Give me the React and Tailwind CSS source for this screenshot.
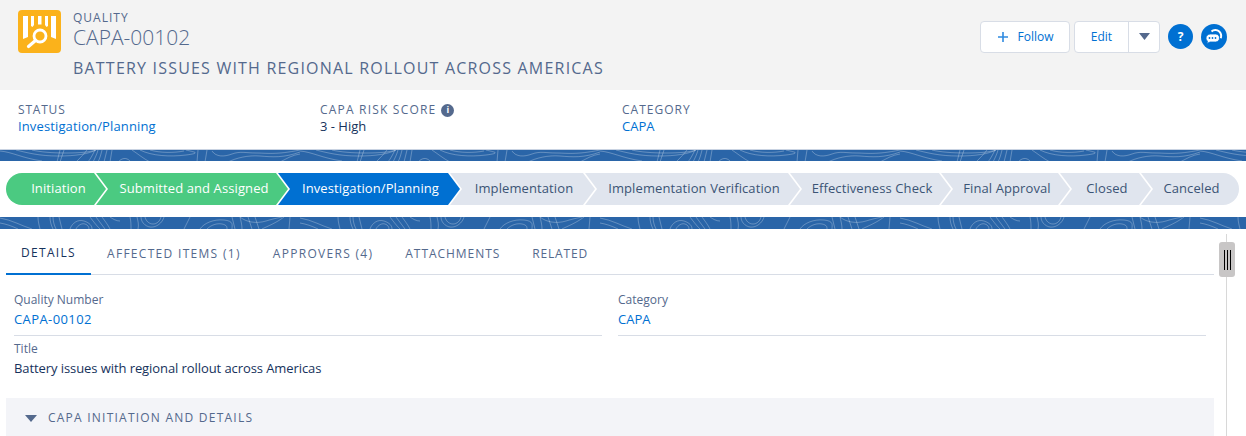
import { useId } from "react"

const steps = [
  { label: "Initiation", cls: "w-[100px] pl-[5px]! bg-[#4bca81] text-white font-medium rounded-l-full [clip-path:polygon(0_0,calc(100%-12px)_0,100%_50%,calc(100%-12px)_100%,0_100%)]" },
  { label: "Submitted and Assigned", cls: "w-[192px] -ml-[10px] pl-[4px]! bg-[#4bca81] text-white font-medium [clip-path:polygon(0_0,calc(100%-12px)_0,100%_50%,calc(100%-12px)_100%,0_100%,12px_50%)]" },
  { label: "Investigation/Planning", cls: "w-[182px] -ml-[10px] bg-[#0070d2] text-white font-medium [clip-path:polygon(0_0,calc(100%-12px)_0,100%_50%,calc(100%-12px)_100%,0_100%,12px_50%)]" },
  { label: "Implementation", cls: "w-[145px] -ml-[10px] bg-[#e0e5ee] text-[#3b5475] [clip-path:polygon(0_0,calc(100%-12px)_0,100%_50%,calc(100%-12px)_100%,0_100%,12px_50%)]" },
  { label: "Implementation Verification", cls: "w-[215px] -ml-[10px] bg-[#e0e5ee] text-[#3b5475] [clip-path:polygon(0_0,calc(100%-12px)_0,100%_50%,calc(100%-12px)_100%,0_100%,12px_50%)]" },
  { label: "Effectiveness Check", cls: "w-[161px] -ml-[10px] bg-[#e0e5ee] text-[#3b5475] [clip-path:polygon(0_0,calc(100%-12px)_0,100%_50%,calc(100%-12px)_100%,0_100%,12px_50%)]" },
  { label: "Final Approval", cls: "w-[129px] -ml-[10px] bg-[#e0e5ee] text-[#3b5475] [clip-path:polygon(0_0,calc(100%-12px)_0,100%_50%,calc(100%-12px)_100%,0_100%,12px_50%)]" },
  { label: "Closed", cls: "w-[91px] -ml-[10px] bg-[#e0e5ee] text-[#3b5475] [clip-path:polygon(0_0,calc(100%-12px)_0,100%_50%,calc(100%-12px)_100%,0_100%,12px_50%)]" },
  { label: "Canceled", cls: "w-[98px] -ml-[10px] bg-[#e0e5ee] text-[#3b5475] rounded-r-full [clip-path:polygon(0_0,100%_0,100%_100%,0_100%,12px_50%)]" },
]

const tabs = [
  { label: "Affected Items (1)", cls: "tracking-[1.3px]" },
  { label: "Approvers (4)", cls: "tracking-[1.3px]" },
  { label: "Attachments", cls: "tracking-[0.95px]" },
  { label: "Related", cls: "tracking-[0.85px]" },
]

// contour lines, one 300px tile for each band
const topLines = [
  "M0 1c12 1 22 7 42 10",
  "M16 0c12 3 24 6 42 6s30-2 38-6",
  "M32 0c8 2 20 3 34 3s24-1 30-3",
  "M60 0l-3 12M64 0l-4 12",
  "M76 12c4-4 8-8 11-12M88 12c3-4 5-8 7-12M93 12c2-4 4-8 5-12M98 12c2-4 3-8 4-12M104 12c1-4 2-8 3-12M110 12c1-4 1-8 2-12",
  "M118 12c4-4 8-5 12-1",
  "M132 0c6 4 12 9 18 12",
  "M140 0c12 6 30 7 46 5s8-3 0-5",
  "M150 0c10 3 24 3 34 1",
  "M198 0l-1 12M207 0l-2 12",
  "M212 1c4 6 12 6 20 3s14-1 24-1 20 2 44-3",
  "M228 12c8-4 20-7 32-6s24 2 40-4",
  "M280 12c6-3 12-7 20-8",
]

const bottomLines = [
  "M0 1c12 2 22 8 32 11",
  "M0 6c6 1 12 3 18 6",
  "M38 0c0 4 1 8 2 12M50 0c0 4 1 8 3 12M53 0c0 4 1 8 3 12M59 0c1 4 2 8 3 12",
  "M70 12c2-6 8-10 14-8s8 5 8 8",
  "M76 12c2-4 6-6 9-5s4 3 4 5",
  "M90 0c3 4 6 8 10 12M96 0c3 4 6 8 9 12M102 0c3 4 6 8 8 12M110 0c3 2 6 4 10 4",
  "M130 0c1 4 1 8 1 12M137 0c1 4 2 8 1 12",
  "M141 0c0 6 6 11 12 10s10-6 11-10",
  "M145 0c1 4 4 7 8 7s7-3 8-7",
  "M190 0l-6 12",
  "M200 12c4-6 14-10 24-9s8 5 8 9",
  "M207 12c4-4 10-6 15-5s5 3 5 5",
  "M232 0c1 4 2 8 3 12M240 0c1 4 2 8 2 12M248 0c1 4 3 8 4 12M255 0c1 4 3 8 4 12",
  "M240 0c6 5 16 7 26 4s12-3 16-4",
  "M262 12c6-3 14-6 22-12",
  "M290 0l-1 12",
]

function Band({ lines, border }) {
  const id = useId()
  return (
    <div className={border ? "h-[12px] bg-[#2a65a8] border-t border-[#c9d3e2]" : "h-[12px] bg-[#2a65a8]"}>
      <svg width="100%" height="100%">
        <defs>
          <pattern id={id} width="300" height="12" patternUnits="userSpaceOnUse">
            <path d={lines.join("")} fill="none" stroke="#fff" strokeOpacity="0.36" strokeWidth="0.75" />
          </pattern>
        </defs>
        <rect width="100%" height="100%" fill={`url(#${id})`} />
      </svg>
    </div>
  )
}

function QualityIcon() {
  return (
    <div className="w-[43px] h-[43px] bg-[#fbb21b] rounded-[4px] shrink-0">
      <svg width="43" height="43" viewBox="0 0 43 43" fill="#fff">
        <path d="M5 6h5v21l-5 2z" />
        <path d="M13 6h3v9l-1.500 2-1.500-1z" />
        <path d="M20 6h3.500v8.500h-3.500z" />
        <path d="M27 6h3v10l-1.500 1-1.500-2z" />
        <path d="M33 6h5v23l-5-2z" />
        <circle cx="22" cy="26" r="6" fill="none" stroke="#fff" strokeWidth="2.800" />
        <path d="M17.500 30.500 L10.500 36.500" stroke="#fff" strokeWidth="3.200" strokeLinecap="round" />
      </svg>
    </div>
  )
}

export default function App() {
  return (
    <div className="w-[1246px] h-[436px] overflow-hidden bg-white text-[13px] text-[#16325c] font-['Open_Sans','Noto_Sans',sans-serif]">
      <div className="h-[90px] bg-[#f3f3f3] flex justify-between pl-[18px] pr-[19px]">
        <div className="flex pt-[10px] gap-[12px]">
          <QualityIcon />
          <div>
            <div className="text-[12px] leading-[16px] tracking-[1px] text-[#54698d]">QUALITY</div>
            <div className="text-[21px] leading-[22px] text-[#54698d] font-light">CAPA-00102</div>
            <div className="text-[16px] leading-[20px] mt-[10px] tracking-[1.2px] text-[#54698d]">BATTERY ISSUES WITH REGIONAL ROLLOUT ACROSS AMERICAS</div>
          </div>
        </div>
        <div className="flex items-center gap-[8px] pt-[21px] h-[52px]">
          <div className="flex gap-[4px]">
            <button className="w-[90px] h-[32px] bg-white border border-[#d8dde6] rounded-[4px] flex items-center justify-center gap-[9px] text-[12px] text-[#0070d2]">
              <svg width="12" height="12" viewBox="0 0 12 12"><path d="M6 1v10M1 6h10" stroke="#2f8ae0" strokeWidth="1.600" /></svg>
              Follow
            </button>
            <div className="w-[86px] h-[32px] bg-white border border-[#d8dde6] rounded-[4px] flex text-[12px] text-[#0070d2]">
              <div className="w-[54px] flex items-center justify-center border-r border-[#d8dde6]">Edit</div>
              <div className="flex-1 flex items-center justify-center">
                <svg width="11" height="7" viewBox="0 0 11 7"><path d="M0 0h11L5.500 7z" fill="#54698d" /></svg>
              </div>
            </div>
          </div>
          <div className="w-[25px] h-[25px] rounded-full bg-[#0070d2] text-white flex items-center justify-center text-[12px] font-bold">?</div>
          <div className="w-[26px] h-[26px] rounded-full bg-[#0070d2]">
            <svg width="26" height="26" viewBox="0 0 26 26">
              <path d="M10.500 7.500c2-2 5.500-2.200 7.500-.3 2 1.800 2.600 4.500 1.800 7" fill="none" stroke="#fff" strokeWidth="2" />
              <path d="M9.500 10h5c2.400 0 4 1.800 4 4s-1.600 4-4 4H9l-3 1.500.5-2.400C5.500 16.300 5 15.200 5 14c0-2.200 2-4 4.500-4z" fill="#fff" stroke="#0070d2" strokeWidth="0.800" />
              <circle cx="8.500" cy="14" r="0.900" fill="#0070d2" />
              <circle cx="11.500" cy="14" r="0.900" fill="#0070d2" />
              <circle cx="14.500" cy="14" r="0.900" fill="#0070d2" />
            </svg>
          </div>
        </div>
      </div>

      <div className="h-[59px] flex pl-[18px] pt-[12px]">
        <div className="w-[302px]">
          <div className="text-[12px] leading-[16px] tracking-[0.8px] text-[#54698d]">STATUS</div>
          <div className="leading-[17px] tracking-[0.13px] text-[#0070d2]">Investigation/Planning</div>
        </div>
        <div className="w-[302px]">
          <div className="text-[12px] leading-[16px] tracking-[1.2px] text-[#54698d] flex items-center gap-[5px]">
            CAPA RISK SCORE
            <span className="w-[13px] h-[13px] rounded-full bg-[#54698d] text-white text-[9px] tracking-normal font-bold flex items-center justify-center">i</span>
          </div>
          <div className="leading-[17px]">3 - High</div>
        </div>
        <div>
          <div className="text-[12px] leading-[16px] tracking-[1px] text-[#54698d]">CATEGORY</div>
          <div className="leading-[17px] text-[#0070d2]">CAPA</div>
        </div>
      </div>

      <Band border lines={topLines} />
      <div className="h-[56px] flex items-center pl-[6px] tracking-[0.1px]">
        {steps.map((s) => (
          <div key={s.label} className={`h-[32px] flex items-center justify-center pl-[3px] whitespace-nowrap ${s.cls}`}>
            {s.label}
          </div>
        ))}
      </div>
      <Band lines={bottomLines} />

      <div className="flex h-[207px]">
        <div className="w-[1214px] pl-[6px]">
          <div className="h-[46px] flex items-stretch border-b border-[#d8dde6] text-[12px]">
            <div className="w-[85px] flex items-center justify-center tracking-[1.3px] pt-[4px] border-b-[2px] -mb-px border-[#0070d2]">DETAILS</div>
            {tabs.map((t) => (
              <div key={t.label} className={`px-[16px] pt-[4px] flex items-center text-[#54698d] uppercase ${t.cls}`}>{t.label}</div>
            ))}
          </div>
          <div className="grid grid-cols-2 gap-x-[16px] px-[8px] pt-[16px]">
            <div className="border-b border-[#d8dde6] h-[45px]">
              <div className="text-[12px] leading-[18px] text-[#54698d]">Quality Number</div>
              <div className="leading-[20px] tracking-[0.4px] text-[#0070d2]">CAPA-00102</div>
            </div>
            <div className="border-b border-[#d8dde6] h-[45px]">
              <div className="text-[12px] leading-[18px] text-[#54698d]">Category</div>
              <div className="leading-[20px] text-[#0070d2]">CAPA</div>
            </div>
            <div className="pt-[4px] col-span-2">
              <div className="text-[12px] leading-[18px] text-[#54698d]">Title</div>
              <div className="leading-[20px] tracking-[-0.08px]">Battery issues with regional rollout across Americas</div>
            </div>
          </div>
          <div className="mt-[20px] h-[38px] bg-[#f3f4f8] flex items-center pt-[2px] pl-[19px] gap-[11px] text-[12px] tracking-[1.230px] text-[#54698d]">
            <svg width="12" height="7" viewBox="0 0 12 7"><path d="M0 0h12L6 7z" fill="#54698d" /></svg>
            CAPA INITIATION AND DETAILS
          </div>
        </div>
        <div className="relative w-[32px]">
          <div className="absolute left-[12px] top-[5px] bottom-0 w-px bg-[#d8d8d8]" />
          <div className="absolute left-[5px] top-[13px] w-[16px] h-[35px] bg-[#c8c6c6] rounded-[3px] flex items-center justify-center gap-[2px]">
            <span className="w-px h-[20px] bg-black" />
            <span className="w-px h-[20px] bg-black" />
            <span className="w-px h-[20px] bg-black" />
          </div>
        </div>
      </div>
    </div>
  )
}
